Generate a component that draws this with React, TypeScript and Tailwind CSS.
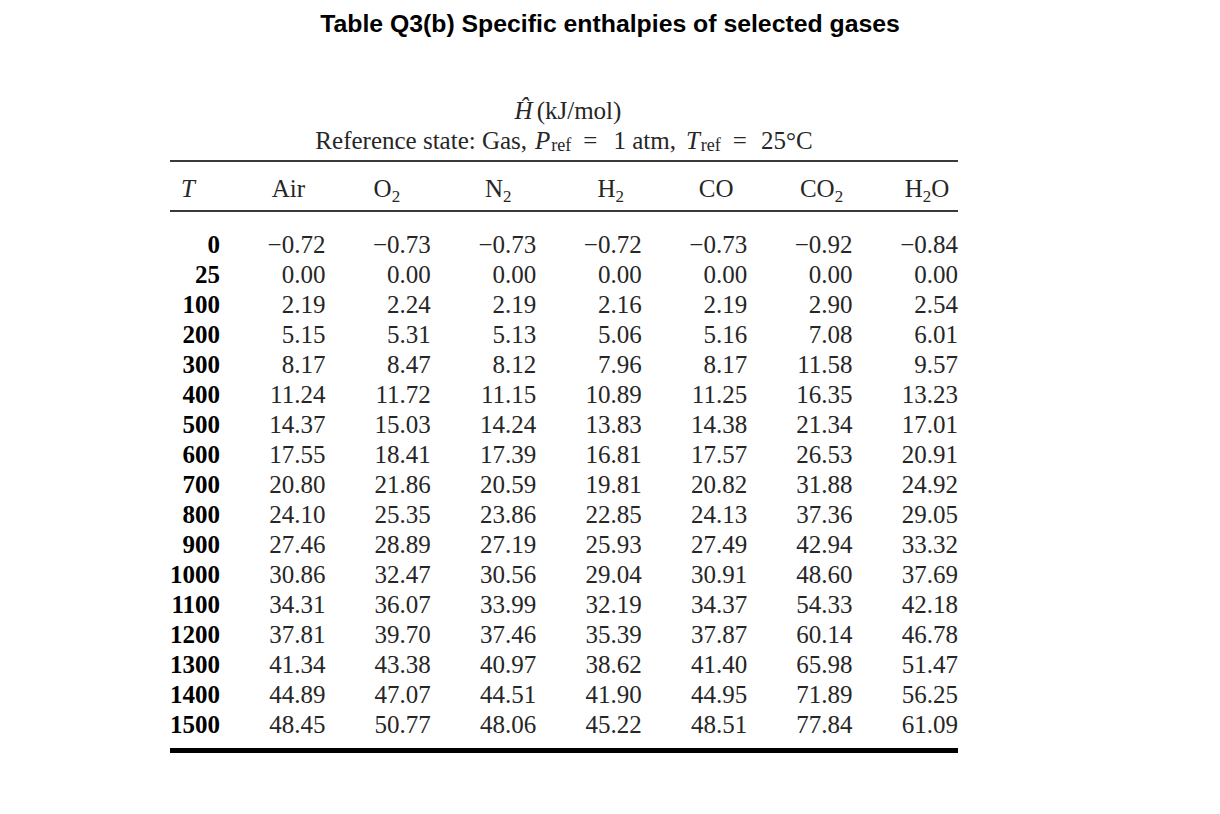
import React from "react";

const rows: [string, string[]][] = [
  ["0", ["\u22120.72", "\u22120.73", "\u22120.73", "\u22120.72", "\u22120.73", "\u22120.92", "\u22120.84"]],
  ["25", ["0.00", "0.00", "0.00", "0.00", "0.00", "0.00", "0.00"]],
  ["100", ["2.19", "2.24", "2.19", "2.16", "2.19", "2.90", "2.54"]],
  ["200", ["5.15", "5.31", "5.13", "5.06", "5.16", "7.08", "6.01"]],
  ["300", ["8.17", "8.47", "8.12", "7.96", "8.17", "11.58", "9.57"]],
  ["400", ["11.24", "11.72", "11.15", "10.89", "11.25", "16.35", "13.23"]],
  ["500", ["14.37", "15.03", "14.24", "13.83", "14.38", "21.34", "17.01"]],
  ["600", ["17.55", "18.41", "17.39", "16.81", "17.57", "26.53", "20.91"]],
  ["700", ["20.80", "21.86", "20.59", "19.81", "20.82", "31.88", "24.92"]],
  ["800", ["24.10", "25.35", "23.86", "22.85", "24.13", "37.36", "29.05"]],
  ["900", ["27.46", "28.89", "27.19", "25.93", "27.49", "42.94", "33.32"]],
  ["1000", ["30.86", "32.47", "30.56", "29.04", "30.91", "48.60", "37.69"]],
  ["1100", ["34.31", "36.07", "33.99", "32.19", "34.37", "54.33", "42.18"]],
  ["1200", ["37.81", "39.70", "37.46", "35.39", "37.87", "60.14", "46.78"]],
  ["1300", ["41.34", "43.38", "40.97", "38.62", "41.40", "65.98", "51.47"]],
  ["1400", ["44.89", "47.07", "44.51", "41.90", "44.95", "71.89", "56.25"]],
  ["1500", ["48.45", "50.77", "48.06", "45.22", "48.51", "77.84", "61.09"]],
];

function Sub({ children }: { children: React.ReactNode }) {
  return <span className="text-[17px] relative top-[5px]">{children}</span>;
}

function RefSub({ children }: { children: React.ReactNode }) {
  return <span className="text-[18px] relative top-[4px] ml-[1px]">{children}</span>;
}

export default function App() {
  const serif = { fontFamily: '"Liberation Serif", "Times New Roman", serif' };
  return (
    <div className="w-[1220px] h-[814px] bg-white overflow-hidden">
      <div
        className="h-[48px] flex items-center justify-center text-[24.8px] font-bold text-black"
        style={{ fontFamily: '"Liberation Sans", Arial, sans-serif' }}
      >
        Table Q3(b) Specific enthalpies of selected gases
      </div>
      <div className="ml-[170px] w-[788px] mt-[48px] text-[25px] text-[#262626]" style={serif}>
        <div className="h-[30px] flex items-center justify-center pl-[8px]">
          <span className="italic mr-[4px]">Ĥ</span>
          <span>(kJ/mol)</span>
        </div>
        <div className="h-[30px] flex items-center justify-center whitespace-pre">
          <span>Reference state: Gas,</span>
          <span className="italic ml-[8px]">P</span>
          <RefSub>ref</RefSub>
          <span className="ml-[12px] mr-[16px]">=</span>
          <span>1 atm,</span>
          <span className="italic ml-[10px]">T</span>
          <RefSub>ref</RefSub>
          <span className="ml-[12px] mr-[14px]">=</span>
          <span>25°C</span>
        </div>
        <div className="mt-[4px] h-[2px] bg-[#3a3a3a]" />
        <div className="grid grid-cols-[50px_repeat(7,1fr)] h-[48px] items-center pt-[6px]">
          <div className="text-center italic pr-[14px]">T</div>
          {[
            ["Air", "mr-[6px]"],
            ["O", "2", "mr-[13px]"],
            ["N", "2", "mr-[7px]"],
            ["H", "2", "mr-0"],
            ["CO", "mr-0"],
            ["CO", "2", "mr-0"],
            ["H2O", "mr-0"],
          ].map((h, i) => {
            const cls = h[h.length - 1];
            let label: React.ReactNode;
            if (h[0] === "H2O") {
              label = (
                <>
                  H<Sub>2</Sub>O
                </>
              );
            } else if (h.length === 3) {
              label = (
                <>
                  {h[0]}
                  <Sub>{h[1]}</Sub>
                </>
              );
            } else {
              label = h[0];
            }
            return (
              <div key={i} className="flex justify-end">
                <div className={`w-[62px] text-center whitespace-nowrap ${cls}`}>{label}</div>
              </div>
            );
          })}
        </div>
        <div className="h-[2px] bg-[#3a3a3a]" />
        <div className="pt-[14px]">
          {rows.map(([t, vals]) => (
            <div key={t} className="grid grid-cols-[50px_repeat(7,1fr)] h-[30px] items-center">
              <div className="text-right font-bold text-black">{t}</div>
              {vals.map((v, j) => (
                <div key={j} className="text-right">
                  {v}
                </div>
              ))}
            </div>
          ))}
        </div>
        <div className="mt-[12px] h-[5px] bg-black" />
      </div>
    </div>
  );
}
